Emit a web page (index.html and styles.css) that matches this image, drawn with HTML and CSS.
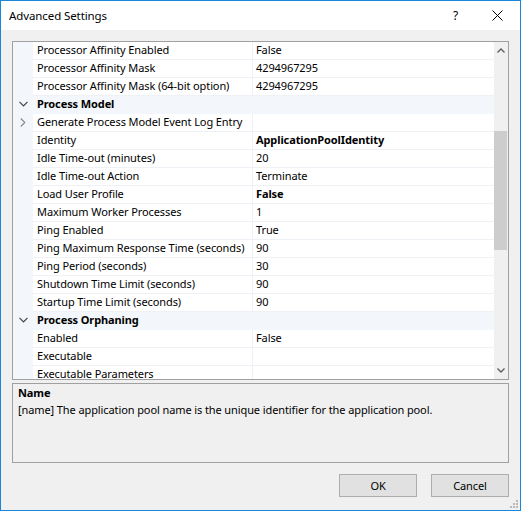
FILE: index.html
```html
<!DOCTYPE html>
<html>
<head>
<meta charset="utf-8">
<link rel="stylesheet" href="styles.css">
</head>
<body>
<div class="window">
  <div class="titlebar">
    <span class="title">Advanced Settings</span>
    <span class="help">?</span>
    <span class="close"><svg width="11" height="11" viewBox="0 0 11 11"><path d="M0.5 0.5L10.5 10.5M10.5 0.5L0.5 10.5" stroke="#000" stroke-width="1" fill="none"/></svg></span>
  </div>
  <div class="content">
    <div class="grid">
      <div class="rows">
        <div class="row"><div class="gut"></div><div class="name">Processor Affinity Enabled</div><div class="val">False</div></div>
        <div class="row"><div class="gut"></div><div class="name">Processor Affinity Mask</div><div class="val">4294967295</div></div>
        <div class="row"><div class="gut"></div><div class="name">Processor Affinity Mask (64-bit option)</div><div class="val">4294967295</div></div>
        <div class="row cat"><div class="gut"><svg width="9" height="6" viewBox="0 0 9 6"><path d="M0.5 0.8L4.5 4.8L8.5 0.8" stroke="#444" stroke-width="1.2" fill="none"/></svg></div><div class="catname">Process Model</div></div>
        <div class="row"><div class="gut"><svg width="6" height="9" viewBox="0 0 6 9"><path d="M0.8 0.5L4.8 4.5L0.8 8.5" stroke="#888" stroke-width="1.1" fill="none"/></svg></div><div class="name">Generate Process Model Event Log Entry</div><div class="val"></div></div>
        <div class="row"><div class="gut"></div><div class="name">Identity</div><div class="val b">ApplicationPoolIdentity</div></div>
        <div class="row"><div class="gut"></div><div class="name">Idle Time-out (minutes)</div><div class="val">20</div></div>
        <div class="row"><div class="gut"></div><div class="name">Idle Time-out Action</div><div class="val">Terminate</div></div>
        <div class="row"><div class="gut"></div><div class="name">Load User Profile</div><div class="val b">False</div></div>
        <div class="row"><div class="gut"></div><div class="name">Maximum Worker Processes</div><div class="val">1</div></div>
        <div class="row"><div class="gut"></div><div class="name">Ping Enabled</div><div class="val">True</div></div>
        <div class="row"><div class="gut"></div><div class="name">Ping Maximum Response Time (seconds)</div><div class="val">90</div></div>
        <div class="row"><div class="gut"></div><div class="name">Ping Period (seconds)</div><div class="val">30</div></div>
        <div class="row"><div class="gut"></div><div class="name">Shutdown Time Limit (seconds)</div><div class="val">90</div></div>
        <div class="row"><div class="gut"></div><div class="name">Startup Time Limit (seconds)</div><div class="val">90</div></div>
        <div class="row cat"><div class="gut"><svg width="9" height="6" viewBox="0 0 9 6"><path d="M0.5 0.8L4.5 4.8L8.5 0.8" stroke="#444" stroke-width="1.2" fill="none"/></svg></div><div class="catname">Process Orphaning</div></div>
        <div class="row"><div class="gut"></div><div class="name">Enabled</div><div class="val">False</div></div>
        <div class="row"><div class="gut"></div><div class="name">Executable</div><div class="val"></div></div>
        <div class="row"><div class="gut"></div><div class="name">Executable Parameters</div><div class="val"></div></div>
      </div>
      <div class="scrollbar">
        <div class="arrow"><svg width="8" height="5" viewBox="0 0 8 5"><path d="M0.5 4.5L4 1L7.5 4.5" stroke="#606060" stroke-width="1.4" fill="none"/></svg></div>
        <div class="track"><div class="thumb"></div></div>
        <div class="arrow"><svg width="8" height="5" viewBox="0 0 8 5"><path d="M0.5 0.5L4 4L7.5 0.5" stroke="#606060" stroke-width="1.4" fill="none"/></svg></div>
      </div>
    </div>
    <div class="desc">
      <div class="desc-title">Name</div>
      <div class="desc-text">[name] The application pool name is the unique identifier for the application pool.</div>
    </div>
    <div class="buttons">
      <button class="btn">OK</button>
      <button class="btn">Cancel</button>
    </div>
  </div>
  <svg class="grip" width="10" height="10" viewBox="0 0 10 10">
    <rect x="7" y="1" width="2" height="2" fill="#b8b8b8"/>
    <rect x="4" y="4" width="2" height="2" fill="#b8b8b8"/>
    <rect x="7" y="4" width="2" height="2" fill="#b8b8b8"/>
    <rect x="1" y="7" width="2" height="2" fill="#b8b8b8"/>
    <rect x="4" y="7" width="2" height="2" fill="#b8b8b8"/>
    <rect x="7" y="7" width="2" height="2" fill="#b8b8b8"/>
  </svg>
</div>
</body>
</html>
```
FILE: styles.css
```css
* { box-sizing: border-box; }
html, body { margin: 0; padding: 0; }
body {
  font-family: "Segoe UI", "Noto Sans", "Open Sans", sans-serif;
  font-size: 11px;
  letter-spacing: -0.1px;
  color: #000;
  background: #fff;
}
.window {
  position: relative;
  width: 521px;
  height: 511px;
  border: 1px solid #1a86d9;
  background: #f0f0f0;
  display: flex;
  flex-direction: column;
}
.titlebar {
  height: 29px;
  background: #fff;
  display: flex;
  align-items: center;
  padding-left: 8px;
  padding-bottom: 1px;
  flex: none;
}
.title { flex: 1; font-size: 11.5px; }
.help { width: 12px; margin-right: 27px; font-size: 12px; }
.close { width: 11px; margin-right: 17px; height: 11px; display: flex; }
.content {
  flex: 1;
  display: flex;
  flex-direction: column;
  padding: 11px 11px 0 11px;
}
.grid {
  height: 339px;
  border: 1px solid #a0a0a0;
  background: #fff;
  display: flex;
  overflow: hidden;
}
.rows { flex: 1; overflow: hidden; }
.row {
  height: 18px;
  display: flex;
}
.gut {
  width: 20px;
  background: #f3f6fa;
  display: flex;
  align-items: center;
  justify-content: center;
  flex: none;
  padding-bottom: 2px;
}
.name {
  width: 220px;
  padding-left: 4px;
  border-bottom: 1px solid #eef1f5;
  border-right: 1px solid #eef1f5;
  white-space: nowrap;
  overflow: hidden;
  line-height: 15px;
  flex: none;
}
.val {
  flex: 1;
  padding-left: 3px;
  border-bottom: 1px solid #eef1f5;
  line-height: 15px;
  white-space: nowrap;
}
.b { font-weight: bold; }
.cat { background: #f3f6fa; }
.catname {
  padding-left: 4px;
  font-weight: bold;
  line-height: 15px;
}
.scrollbar {
  width: 14px;
  background: #f0f0f0;
  display: flex;
  flex-direction: column;
  flex: none;
}
.arrow {
  height: 17px;
  display: flex;
  align-items: center;
  justify-content: center;
}
.track { flex: 1; padding-top: 72px; }
.thumb { height: 119px; background: #cdcdcd; margin: 0 1px 0 0; }
.desc {
  margin-top: 3px;
  height: 80px;
  border: 1px solid #a0a0a0;
  padding: 0 5px;
}
.desc-title { font-weight: bold; line-height: 17px; }
.desc-text { line-height: 17px; }
.buttons {
  display: flex;
  justify-content: flex-end;
  gap: 14px;
  margin-top: 11px;
}
.btn {
  width: 78px;
  height: 23px;
  background: #e1e1e1;
  border: 1px solid #adadad;
  font-family: inherit;
  font-size: 11px;
  letter-spacing: -0.1px;
  color: #000;
  padding: 0;
}
.grip { position: absolute; right: 1px; bottom: 1px; }
```
